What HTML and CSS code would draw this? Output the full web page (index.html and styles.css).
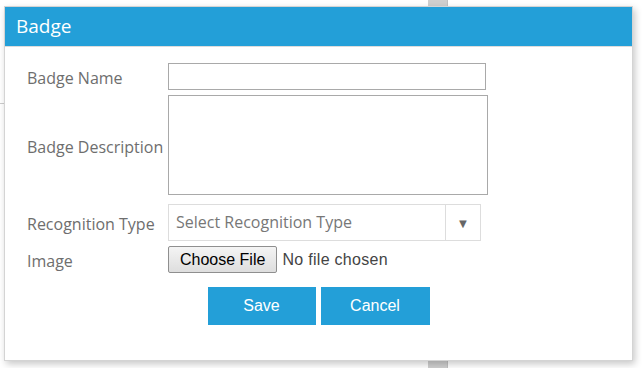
FILE: index.html
```html
<!DOCTYPE html>
<html lang="en">
<head>
    <meta charset="UTF-8">
    <meta name="viewport" content="width=device-width, initial-scale=1.0">
    <title>Badge</title>
    <link rel="stylesheet" href="styles.css">
</head>
<body>
    <div class="page-scroll"></div>
    <div class="page-rule"></div>

    <div class="modal">
        <div class="modal-header">Badge</div>

        <form class="modal-body" id="badge-form">
            <div class="form-row">
                <label for="badge-name">Badge Name</label>
                <input type="text" id="badge-name" class="text-input">
            </div>
            <div class="form-row row-desc">
                <label for="badge-desc">Badge Description</label>
                <textarea id="badge-desc" class="text-area"></textarea>
            </div>
            <div class="form-row row-type">
                <label>Recognition Type</label>
                <div class="select-box">
                    <span class="select-text">Select Recognition Type</span>
                    <span class="select-arrow">&#9660;</span>
                </div>
            </div>
            <div class="form-row row-image">
                <label>Image</label>
                <div class="file-field">
                    <span class="file-button">Choose File</span>
                    <span class="file-name">No file chosen</span>
                </div>
            </div>
            <div class="form-actions">
                <button type="submit" class="btn">Save</button>
                <button type="button" class="btn">Cancel</button>
            </div>
        </form>
    </div>
</body>
</html>
```

FILE: styles.css
```css
* {
    box-sizing: border-box;
}

html, body {
    height: 100%;
    margin: 0;
    padding: 0;
    font-family: 'Open Sans', 'Noto Sans', sans-serif;
    background-color: #fff;
    overflow: hidden;
}

/* bits of the page behind the dialog */
.page-scroll {
    position: absolute;
    left: 428px;
    top: 0;
    width: 20px;
    height: 368px;
    background-color: #cfcfcf;
    border-right: 1px solid #c0c0c0;
}

.page-rule {
    position: absolute;
    left: 0;
    top: 103px;
    width: 4px;
    height: 1px;
    background-color: #ccc;
}

.modal {
    position: relative;
    z-index: 1;
    width: 629px;
    height: 355px;
    margin: 6px 0 0 4px;
    background-color: #fff;
    border: 1px solid #d4d4d4;
    box-shadow: 2px 3px 7px rgba(0, 0, 0, 0.22);
}

.modal-header {
    height: 40px;
    padding-left: 11px;
    background-color: #239fd8;
    border-bottom: 1px solid #dcdcdc;
    color: #fff;
    font-size: 19px;
    line-height: 38px;
}

.modal-body {
    padding: 16px 0 0 22px;
}

.form-row {
    display: flex;
    align-items: center;
}

.form-row label {
    width: 141px;
    padding-top: 3px;
    color: #6e6e6e;
    font-size: 16px;
    white-space: nowrap;
}

.text-input {
    width: 318px;
    height: 27px;
    border: 1px solid #a9a9a9;
    margin: 0;
}

.row-desc {
    margin-top: 5px;
}

.text-area {
    width: 320px;
    height: 100px;
    border: 1px solid #a9a9a9;
    margin: 0;
    resize: none;
    display: block;
}

.row-type {
    margin-top: 9px;
}

.select-box {
    display: flex;
    width: 313px;
    height: 37px;
    border: 1px solid #ddd;
}

.select-text {
    flex: 1;
    padding-left: 7px;
    color: #777;
    font-size: 16px;
    line-height: 34px;
    border-right: 1px solid #ddd;
}

.select-arrow {
    width: 34px;
    text-align: center;
    color: #666;
    font-size: 13px;
    line-height: 36px;
}

.row-image {
    margin-top: 5px;
}

.file-field {
    display: flex;
    align-items: center;
    font-family: 'Liberation Sans', Arial, sans-serif;
    font-size: 16px;
}

.file-button {
    height: 27px;
    padding: 0 11px 0 11px;
    line-height: 25px;
    color: #000;
    background: linear-gradient(#f4f4f4, #dedede);
    border: 1px solid #8f8f8f;
    border-radius: 2px;
}

.file-name {
    margin-left: 5px;
    color: #444;
    letter-spacing: 0.3px;
}

.form-actions {
    display: flex;
    justify-content: center;
    gap: 5px;
    margin: 14px 0 0 -22px;
}

.btn {
    width: 108px;
    height: 38px;
    padding: 0;
    border: none;
    background-color: #239fd8;
    color: #fff;
    font-family: 'Liberation Sans', Arial, sans-serif;
    font-size: 16px;
    cursor: pointer;
}

.btn + .btn {
    width: 109px;
}
```
